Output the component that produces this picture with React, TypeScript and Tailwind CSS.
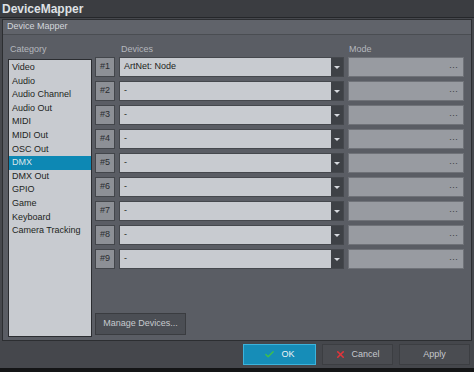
import { Check, X } from "lucide-react";

const categories = [
  "Video",
  "Audio",
  "Audio Channel",
  "Audio Out",
  "MIDI",
  "MIDI Out",
  "OSC Out",
  "DMX",
  "DMX Out",
  "GPIO",
  "Game",
  "Keyboard",
  "Camera Tracking",
];

const devices = ["ArtNet: Node", "-", "-", "-", "-", "-", "-", "-", "-"];

const DeviceRow = ({ idx, value }: { idx: number; value: string }) => {
  return (
    <div className="flex items-center h-[20px]">
      {/* slot number */}
      <div className="w-[20px] h-[20px] flex items-center justify-center bg-[#8d9096] border border-[#43464b] text-[#2a2c30] text-[9px]">
        #{idx}
      </div>
      {/* device dropdown */}
      <div className="ml-[4px] w-[225px] h-[20px] flex border border-[#45484d]">
        <div className="flex-1 bg-[#c8cbd0] flex items-center pl-[4px] text-[#1d1f22] text-[9px]">
          {value}
        </div>
        <div className="w-[12px] bg-[#3e4146] flex items-center justify-center">
          <div className="w-0 h-0 border-l-[3px] border-r-[3px] border-t-[3px] border-l-transparent border-r-transparent border-t-[#d6d9de]" />
        </div>
      </div>
      {/* mode field */}
      <div className="ml-[4px] w-[116px] h-[20px] bg-[#989ba1] border border-[#6f7278] flex items-center justify-end pr-[5px] text-[#3a3c40] text-[9px] leading-none">
        ···
      </div>
    </div>
  );
};

export default function App() {
  return (
    <div
      className="w-[474px] h-[372px] flex flex-col bg-[#1e1f21] overflow-hidden"
      style={{ fontFamily: '"Liberation Sans", Arial, sans-serif' }}
    >
      {/* Title bar */}
      <div className="h-[17px] bg-[#3b3d41] flex items-center pl-[2px] text-[12px] font-bold text-[#dfe1e5]">
        DeviceMapper
      </div>
      <div className="h-[1px] bg-[#25272a]" />

      {/* Body */}
      <div className="flex-1 bg-[#46484d] flex flex-col">
        <div className="mx-[2px] mt-[1px] h-[322px] border border-[#2c2e31] flex flex-col">
          {/* Panel header */}
          <div className="h-[15px] bg-[#60636a] border-b border-[#4a4d52] flex items-center pl-[4px] text-[9px] text-[#d4d7dc]">
            Device Mapper
          </div>

          {/* Panel content */}
          <div className="flex-1 bg-[#5a5d64] flex pl-[5px] pr-[5px] pt-[8px] pb-[3px]">
            {/* Category */}
            <div className="w-[84px] flex flex-col">
              <div className="h-[16px] pl-[2px] text-[9px] text-[#b4b7bd]">Category</div>
              <div className="flex-1 bg-[#c8cbd0] border border-[#2b2d31] pt-[1px]">
                {categories.map((c) => (
                  <div
                    key={c}
                    className={
                      c === "DMX"
                        ? "h-[13.6px] flex items-center pl-[3px] bg-[#0d88b4] text-[#dde6ea] text-[9px]"
                        : "h-[13.6px] flex items-center pl-[3px] text-[#1d1f22] text-[9px]"
                    }
                  >
                    {c}
                  </div>
                ))}
              </div>
            </div>

            {/* Devices / Mode */}
            <div className="ml-[3px] flex-1 flex flex-col">
              <div className="h-[14px] flex text-[9px] text-[#b4b7bd]">
                <span className="ml-[26px]">Devices</span>
                <span className="ml-[196px]">Mode</span>
              </div>
              <div className="flex flex-col gap-[4px]">
                {devices.map((d, i) => (
                  <DeviceRow key={i} idx={i + 1} value={d} />
                ))}
              </div>
              <div className="flex-1" />
              <button className="mb-[2px] w-[91px] h-[22px] bg-[#4b4e54] border border-[#3a3c40] text-[#c6c9ce] text-[9px] flex items-center justify-center">
                Manage Devices...
              </button>
            </div>
          </div>
        </div>

        {/* Footer buttons */}
        <div className="flex-1 flex items-center justify-end pr-[4px] gap-[6px] bg-[#45474c]">
          <button className="w-[73px] h-[21px] bg-[#168db8] border border-[#3cb3dc] text-[#eef3f6] text-[9px] flex items-center justify-center gap-[6px]">
            <Check size={11} strokeWidth={3} className="text-[#3fc04a]" />
            OK
          </button>
          <button className="w-[71px] h-[21px] bg-[#4a4c51] border border-[#3c3e42] text-[#c6c9ce] text-[9px] flex items-center justify-center gap-[5px]">
            <X size={11} strokeWidth={3.5} className="text-[#e0353b]" />
            Cancel
          </button>
          <button className="w-[71px] h-[21px] bg-[#4a4c51] border border-[#3c3e42] text-[#c6c9ce] text-[9px] flex items-center justify-center">
            Apply
          </button>
        </div>
      </div>
      <div className="h-[4px] bg-[#141516]" />
    </div>
  );
}
